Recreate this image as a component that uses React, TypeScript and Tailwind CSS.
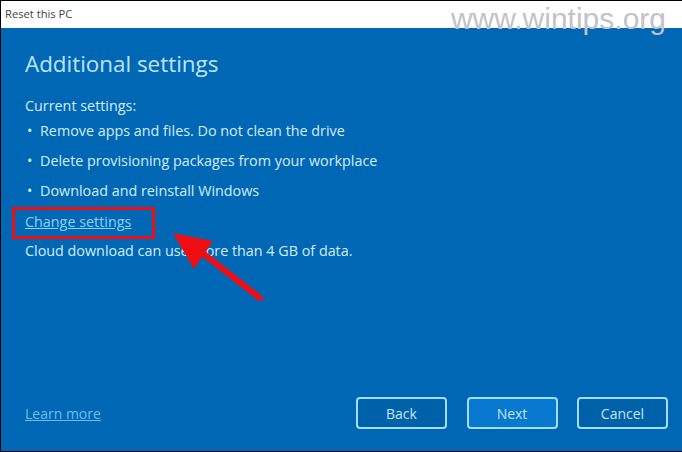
export default function App() {
  const items = [
    'Remove apps and files. Do not clean the drive',
    'Delete provisioning packages from your workplace',
    'Download and reinstall Windows',
  ];

  return (
    <div className="relative w-[682px] h-[452px] flex flex-col overflow-hidden bg-black pt-px pb-px pl-px font-['Open_Sans',sans-serif]">
      {/* Title bar */}
      <div className="h-[27px] shrink-0 bg-white flex items-center pl-[4px] text-[11.2px] text-[#444444]">
        Reset this PC
      </div>

      {/* Dialog body */}
      <div className="flex-1 flex flex-col bg-[#0067b5] pl-6 pr-[14px] text-[#d4ecfa]">
        <h1 className="mt-[20px] text-[22.4px] leading-8 text-[#bfe3f8]">Additional settings</h1>
        <p className="mt-[16px] text-[14.35px] leading-5">Current settings:</p>
        <ul className="mt-[5px] flex flex-col gap-[10px] text-[14.35px] leading-5">
          {items.map((item) => (
            <li key={item} className="flex">
              <span className="w-[15px] pl-[2px]">•</span>
              <span>{item}</span>
            </li>
          ))}
        </ul>
        <a className="mt-[11px] self-start text-[14.35px] leading-5 text-[#8fd0f5] underline">Change settings</a>
        <p className="mt-[9px] text-[14.35px] leading-5">Cloud download can use more than 4 GB of data.</p>

        {/* Footer */}
        <div className="mt-auto mb-[22px] flex items-center justify-between">
          <a className="text-[14px] text-[#6fbdf0] underline">Learn more</a>
          <div className="flex gap-[19.5px] text-[14px] text-[#c4e5f8]">
            <button className="w-[91px] h-[32px] rounded-[4px] border-2 border-[#a5dcf6] bg-[#0061ab]">Back</button>
            <button className="w-[91px] h-[32px] rounded-[4px] border-2 border-[#a5dcf6] bg-[#0678cf]">Next</button>
            <button className="w-[91px] h-[32px] rounded-[4px] border-2 border-[#a5dcf6] bg-[#0061ab]">Cancel</button>
          </div>
        </div>
      </div>

      {/* Red annotation box */}
      <div className="absolute left-3 top-[207px] w-[143px] h-[32px] border-[3px] border-[#ee0d12]" />

      {/* Red annotation arrow */}
      <svg className="absolute left-[165px] top-[225px]" width="105" height="80" viewBox="165 225 105 80">
        <polygon points="173,233 213,241 194,269" fill="#ee0d12" />
        <path d="M200 251 L260 298" stroke="#ee0d12" strokeWidth="6" strokeLinecap="round" fill="none" />
      </svg>

      {/* Watermark */}
      <div className="absolute right-[16px] top-[3px] font-['Liberation_Sans',sans-serif] text-[30px] leading-8 text-[#c2c2c8]">
        www.wintips.org
      </div>
    </div>
  );
}
